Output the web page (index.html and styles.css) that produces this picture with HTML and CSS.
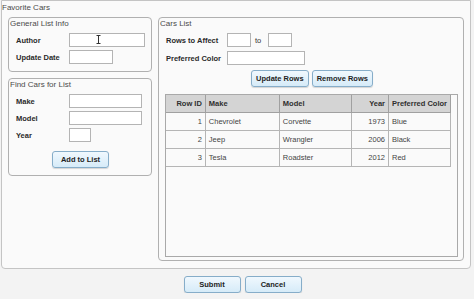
FILE: index.html
```html
<!DOCTYPE html>
<html lang="en">
<head>
    <meta charset="UTF-8">
    <title>Favorite Cars</title>
    <link rel="stylesheet" href="styles.css">
</head>
<body>

<div class="window">
    <div class="window-title">Favorite Cars</div>

    <div class="columns">
        <div class="left-col">
            <div class="group">
                <div class="group-title">General List Info</div>
                <div class="form-grid">
                    <label>Author</label>
                    <div class="cursor-wrap">
                        <input type="text" class="w-author">
                        <svg class="ibeam" width="5" height="9" viewBox="0 0 5 9">
                            <path d="M0.5 0.5h4M2.5 0.5v8M0.5 8.5h4" stroke="#333" stroke-width="1" fill="none"/>
                        </svg>
                    </div>
                    <label>Update Date</label>
                    <input type="text" class="w-date">
                </div>
            </div>

            <div class="group">
                <div class="group-title">Find Cars for List</div>
                <div class="form-grid">
                    <label>Make</label>
                    <input type="text" class="w-make">
                    <label>Model</label>
                    <input type="text" class="w-make">
                    <label>Year</label>
                    <input type="text" class="w-year">
                </div>
                <div class="btn-row">
                    <button class="btn">Add to List</button>
                </div>
            </div>
        </div>

        <div class="group cars-list">
            <div class="group-title">Cars List</div>
            <div class="form-grid wide">
                <label>Rows to Affect</label>
                <div class="range">
                    <input type="text" class="w-row">
                    <span>to</span>
                    <input type="text" class="w-row">
                </div>
                <label>Preferred Color</label>
                <input type="text" class="w-color">
            </div>
            <div class="btn-row tight">
                <button class="btn">Update Rows</button>
                <button class="btn">Remove Rows</button>
            </div>

            <div class="table-box">
                <table class="cars">
                    <thead>
                        <tr>
                            <th class="num c-id">Row ID</th>
                            <th class="c-make">Make</th>
                            <th class="c-model">Model</th>
                            <th class="num c-year">Year</th>
                            <th class="c-color">Preferred Color</th>
                        </tr>
                    </thead>
                    <tbody>
                        <tr><td class="num">1</td><td>Chevrolet</td><td>Corvette</td><td class="num">1973</td><td>Blue</td></tr>
                        <tr><td class="num">2</td><td>Jeep</td><td>Wrangler</td><td class="num">2006</td><td>Black</td></tr>
                        <tr><td class="num">3</td><td>Tesla</td><td>Roadster</td><td class="num">2012</td><td>Red</td></tr>
                    </tbody>
                </table>
            </div>
        </div>
    </div>
</div>

<div class="footer">
    <button class="btn">Submit</button>
    <button class="btn">Cancel</button>
</div>

</body>
</html>
```

FILE: styles.css
```css
body {
    margin: 0;
    background: #f3f3f3;
    font-family: "Liberation Sans", Arial, sans-serif;
    font-size: 7.5px;
    color: #333;
}

.window {
    width: 470px;
    margin-left: 1px;
    box-sizing: border-box;
    height: 269px;
    border: 1px solid #c4c4c4;
    border-radius: 0 0 4px 4px;
    background: #fafafa;
    padding: 1px 6px 0 6px;
}

.window-title {
    font-size: 8px;
    line-height: 12px;
    color: #4a4a4a;
    margin-left: -6px;
    margin-bottom: 3px;
}

.columns {
    display: flex;
    gap: 6px;
}

.left-col {
    width: 145px;
    display: flex;
    flex-direction: column;
    gap: 6px;
}

.group {
    border: 1px solid #b0b0b0;
    border-radius: 4px;
    background: #fafafa;
    padding: 0 6px 7px 7px;
}

.group-title {
    font-size: 8px;
    line-height: 11px;
    color: #4a4a4a;
    margin-left: -6px;
    margin-bottom: 4px;
}

.form-grid {
    display: grid;
    grid-template-columns: 53px auto;
    row-gap: 3px;
    align-items: center;
    justify-items: start;
}

.form-grid.wide {
    grid-template-columns: 61px auto;
    row-gap: 4px;
}

.form-grid label {
    font-weight: bold;
    color: #2a2a2a;
}

input {
    box-sizing: border-box;
    height: 14px;
    border: 1px solid #b4b4b4;
    background: #fff;
    padding: 0;
    margin: 0;
    display: block;
}

.w-author { width: 76px; }
.w-date { width: 44px; }
.w-make { width: 73px; }
.w-year { width: 22px; }
.w-row { width: 24px; }
.w-color { width: 78px; }

.cursor-wrap {
    position: relative;
}

.ibeam {
    position: absolute;
    left: 27px;
    top: 2px;
}

.range {
    display: flex;
    align-items: center;
    gap: 4px;
}

.range span {
    width: 9px;
    color: #333;
}

.btn-row {
    display: flex;
    justify-content: center;
    gap: 3px;
    margin-top: 9px;
}

.btn-row.tight {
    margin-top: 5px;
}

.btn {
    height: 17px;
    min-width: 57px;
    padding: 0 4px;
    border: 1px solid #86adc9;
    border-radius: 3px;
    background: linear-gradient(#f0f8fe, #d6ebf8);
    box-shadow: 0 1px 1px rgba(0, 0, 0, 0.15);
    font-family: "Liberation Sans", Arial, sans-serif;
    font-size: 7.5px;
    font-weight: bold;
    color: #222;
}

.cars-list {
    width: 308px;
    box-sizing: border-box;
    height: 244px;
    display: flex;
    flex-direction: column;
    padding: 0 5px 3px 7px;
}

.table-box {
    flex: 1;
    margin: 7px 0 0 -1px;
    border: 1px solid #a9a9a9;
    background: #fafafa;
}

.cars {
    border-collapse: collapse;
    width: 285px;
}

.cars th,
.cars td {
    height: 17px;
    padding: 0 3px;
    border: 1px solid #b5b5b5;
    text-align: left;
    white-space: nowrap;
}

.cars tr:first-child th {
    border-top: none;
}

.cars th:first-child,
.cars td:first-child {
    border-left: none;
}

.cars th {
    background: #d4d4d4;
    font-weight: bold;
    color: #2f2f2f;
    border-color: #a0a0a0;
}

.cars td {
    color: #444;
    background: #fafafa;
}

.cars .num {
    text-align: right;
}

.c-id { width: 35px; }
.c-make { width: 77px; }
.c-model { width: 75px; }
.c-year { width: 34px; }

.footer {
    display: flex;
    justify-content: center;
    gap: 4px;
    margin-top: 7px;
    padding-left: 11px;
}
```
